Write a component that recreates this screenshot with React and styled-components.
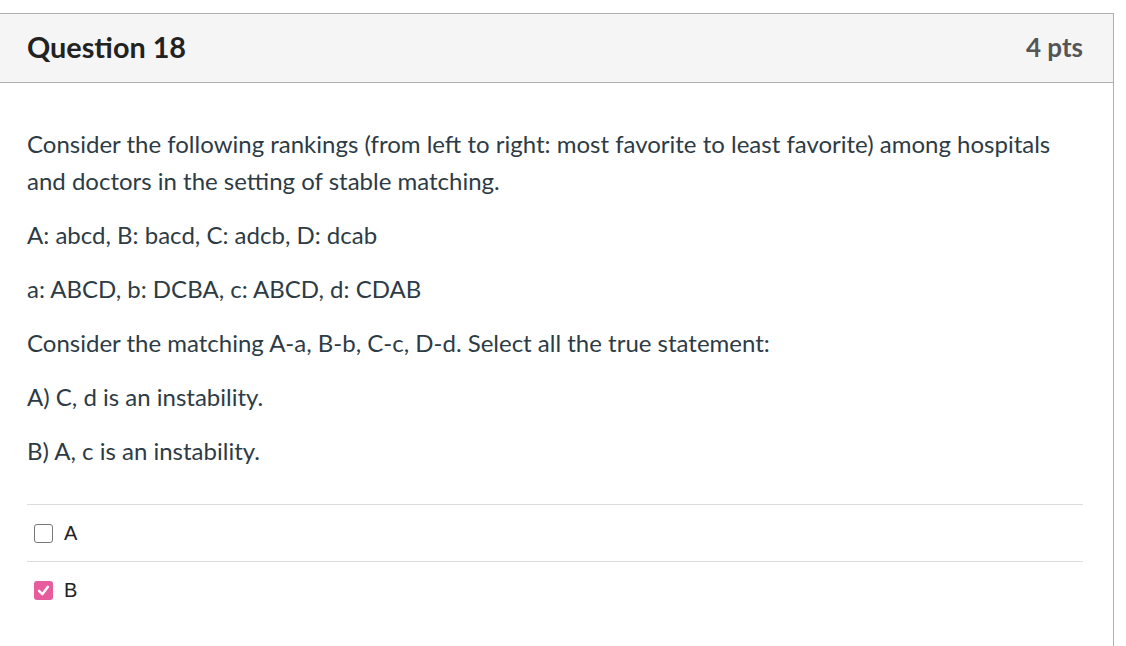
import React from 'react';
import styled, { createGlobalStyle } from 'styled-components';

const GlobalStyle = createGlobalStyle`
  html, body {
    margin: 0;
    padding: 0;
    background: #ffffff;
  }
  body {
    font-family: Lato, "Open Sans", sans-serif;
    color: #2d3b45;
  }
`;

const Page = styled.div`
  padding-top: 13px;
  height: 633px;
  overflow: hidden;
`;

const Card = styled.div`
  margin-left: -2px;
  width: 1116px;
  border: 1px solid #b0b0b0;
  border-bottom: none;
  min-height: 640px;
  box-sizing: border-box;
`;

const Header = styled.div`
  display: flex;
  align-items: center;
  justify-content: space-between;
  height: 69px;
  padding: 0 30px 2px 28px;
  box-sizing: border-box;
  background: #f5f5f5;
  border-bottom: 1px solid #b0b0b0;
`;

const Title = styled.h2`
  margin: 0;
  font-family: Lato, sans-serif;
  font-size: 28.8px;
  font-weight: 700;
  color: #222222;
`;

const Points = styled.div`
  font-family: Lato, sans-serif;
  font-size: 26px;
  font-weight: 700;
  color: #555555;
`;

const Body = styled.div`
  padding: 42px 30px 0 28px;
`;

const Para = styled.p`
  margin: 0 0 17px;
  font-family: Lato, sans-serif;
  font-size: 24px;
  line-height: 37px;
  color: #2d3b45;
`;

const Answers = styled.div`
  margin-top: 35px;
  border-top: 1px solid #dddddd;
`;

const Answer = styled.label`
  display: flex;
  align-items: center;
  gap: 11px;
  height: 56px;
  padding-left: 7px;
  border-bottom: 1px solid ${(p) => (p.$last ? 'transparent' : '#dddddd')};
`;

const Box = styled.span`
  display: flex;
  align-items: center;
  justify-content: center;
  width: 19px;
  height: 19px;
  box-sizing: border-box;
  border-radius: 3px;
  border: ${(p) => (p.$checked ? 'none' : '1.5px solid #777777')};
  background: ${(p) => (p.$checked ? '#e65c9c' : '#ffffff')};
`;

const Label = styled.span`
  font-family: "Liberation Sans", Arial, sans-serif;
  font-size: 20px;
  color: #222222;
`;

function Check() {
  return (
    <svg width="13" height="13" viewBox="0 0 16 16">
      <path d="M2.5 8.5 L6.5 12.5 L13.5 3.5" fill="none" stroke="#ffffff" strokeWidth="3" strokeLinecap="round" strokeLinejoin="round" />
    </svg>
  );
}

export default function App() {
  const options = [
    { key: 'A', checked: false },
    { key: 'B', checked: true },
  ];
  return (
    <>
      <GlobalStyle />
      <Page>
        <Card>
          <Header>
            <Title>Question 18</Title>
            <Points>4 pts</Points>
          </Header>
          <Body>
            <Para>
              Consider the following rankings (from left to right: most favorite to least favorite) among hospitals and doctors in the setting of stable matching.
            </Para>
            <Para>A: abcd, B: bacd, C: adcb, D: dcab</Para>
            <Para>a: ABCD, b: DCBA, c: ABCD, d: CDAB</Para>
            <Para>Consider the matching A-a, B-b, C-c, D-d. Select all the true statement:</Para>
            <Para>A) C, d is an instability.</Para>
            <Para>B) A, c is an instability.</Para>
            <Answers>
              {options.map((o, i) => (
                <Answer key={o.key} $last={i === options.length - 1}>
                  <Box $checked={o.checked}>{o.checked && <Check />}</Box>
                  <Label>{o.key}</Label>
                </Answer>
              ))}
            </Answers>
          </Body>
        </Card>
      </Page>
    </>
  );
}
